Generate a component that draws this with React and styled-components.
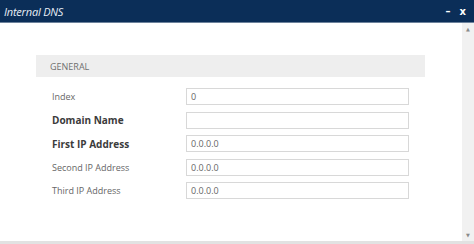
import React from 'react'
import styled, { createGlobalStyle } from 'styled-components'

const GlobalStyle = createGlobalStyle`
  html, body {
    margin: 0;
    padding: 0;
    background: #ffffff;
    font-family: "Open Sans", "Liberation Sans", sans-serif;
  }
`

const fields = [
  { label: 'Index', value: '0', bold: false },
  { label: 'Domain Name', value: '', bold: true },
  { label: 'First IP Address', value: '0.0.0.0', bold: true },
  { label: 'Second IP Address', value: '0.0.0.0', bold: false },
  { label: 'Third IP Address', value: '0.0.0.0', bold: false },
]

function App() {
  return (
    <Window>
      <GlobalStyle />
      <TitleBar>
        <Title>Internal DNS</Title>
        <Controls>
          <Control>&#8211;</Control>
          <Control>x</Control>
        </Controls>
      </TitleBar>
      <Body>
        <Content>
          <Section>
            <SectionHeader>GENERAL</SectionHeader>
            <Rows>
              {fields.map((f) => (
                <Row key={f.label}>
                  <Label $bold={f.bold}>{f.label}</Label>
                  <Field>{f.value}</Field>
                </Row>
              ))}
            </Rows>
          </Section>
        </Content>
        <Scrollbar>
          <Arrow>&#9650;</Arrow>
          <Arrow>&#9660;</Arrow>
        </Scrollbar>
      </Body>
      <Footer />
    </Window>
  )
}

const Window = styled.div`
  width: 474px;
  height: 244px;
  display: flex;
  flex-direction: column;
  overflow: hidden;
`
const TitleBar = styled.div`
  height: 22px;
  background-color: #0b2e58;
  border-bottom: 1px solid #6d829c;
  display: flex;
  align-items: center;
  justify-content: space-between;
  padding: 0 8px 0 4px;
  flex-shrink: 0;
`
const Title = styled.div`
  color: #e8eef6;
  font-size: 11px;
  font-style: italic;
  letter-spacing: -0.2px;
`
const Controls = styled.div`
  display: flex;
  gap: 9px;
  align-items: center;
`
const Control = styled.span`
  color: #ffffff;
  font-size: 10px;
  font-weight: 700;
  font-family: "DejaVu Sans", sans-serif;
`
const Body = styled.div`
  flex: 1;
  display: flex;
  min-height: 0;
`
const Content = styled.div`
  flex: 1;
  padding: 32px 37px 0 36px;
`
const Section = styled.div`
  display: flex;
  flex-direction: column;
`
const SectionHeader = styled.div`
  height: 22px;
  background-color: #eeeeee;
  color: #707070;
  font-size: 9px;
  display: flex;
  align-items: center;
  padding-left: 14px;
`
const Rows = styled.div`
  display: flex;
  flex-direction: column;
  gap: 6.5px;
  margin-top: 11px;
`
const Row = styled.div`
  display: flex;
  align-items: center;
  padding-left: 16px;
  height: 17px;
`
const Label = styled.div`
  width: 134px;
  font-size: ${(p) => (p.$bold ? '10px' : '9px')};
  font-weight: ${(p) => (p.$bold ? 700 : 400)};
  color: ${(p) => (p.$bold ? '#3b3b3b' : '#666666')};
`
const Field = styled.div`
  width: 217px;
  height: 15px;
  border: 1px solid #d8d8d8;
  padding-left: 4px;
  font-size: 9px;
  color: #666666;
  display: flex;
  align-items: center;
`
const Scrollbar = styled.div`
  width: 12px;
  background-color: #f1f1f1;
  display: flex;
  flex-direction: column;
  justify-content: space-between;
  align-items: center;
  padding: 3px 0 3px;
`
const Arrow = styled.span`
  font-size: 5px;
  color: #8a8a8a;
  font-family: "DejaVu Sans", sans-serif;
`
const Footer = styled.div`
  height: 3px;
  background-color: #e2e2e2;
  flex-shrink: 0;
`

export default App
